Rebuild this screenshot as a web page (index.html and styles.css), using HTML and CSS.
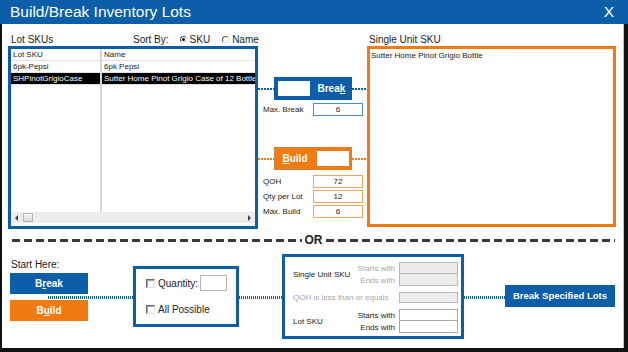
FILE: index.html
```html
<!doctype html>
<html lang="en">
<head>
    <meta charset="UTF-8">
    <title>Build/Break Inventory Lots</title>
    <link rel="stylesheet" href="styles.css">
</head>
<body>
    <div class="window">
        <div class="titlebar">
            <span class="title">Build/Break Inventory Lots</span>
            <span class="close">X</span>
        </div>

        <div class="client">
            <!-- top: lot list, break/build actions, single unit -->
            <div class="top">
                <div class="lots">
                    <div class="caption">
                        <span class="lots-title">Lot SKUs</span>
                        <span class="sort">Sort By:</span>
                        <span class="radio"><span class="radio-dot checked"></span>SKU</span>
                        <span class="radio"><span class="radio-dot"></span>Name</span>
                    </div>
                    <div class="listbox">
                        <div class="list-row list-head">
                            <span>Lot SKU</span>
                            <span>Name</span>
                        </div>
                        <div class="list-row">
                            <span>6pk-Pepsi</span>
                            <span>6pk Pepsi</span>
                        </div>
                        <div class="list-row selected">
                            <span>SHPinotGrigioCase</span>
                            <span>Sutter Home Pinot Grigio Case of 12 Bottles</span>
                        </div>
                        <div class="list-body"></div>
                        <div class="hscroll">
                            <span class="arrow left"></span>
                            <span class="thumb"></span>
                            <span class="arrow right"></span>
                        </div>
                    </div>
                </div>

                <div class="actions">
                    <div class="act-row">
                        <span class="dots blue"></span>
                        <div class="act-box break-box">
                            <span class="act-input"></span>
                            <span class="act-label">Brea<u>k</u></span>
                        </div>
                        <span class="dots blue"></span>
                    </div>
                    <div class="field field-first">
                        <span>Max. Break</span>
                        <span class="num blue-num">6</span>
                    </div>

                    <div class="act-row build-row">
                        <span class="dots orange"></span>
                        <div class="act-box build-box">
                            <span class="act-label build-label"><u>B</u>uild</span>
                            <span class="act-input"></span>
                        </div>
                        <span class="dots orange"></span>
                    </div>
                    <div class="field field-qoh">
                        <span>QOH</span>
                        <span class="num">72</span>
                    </div>
                    <div class="field">
                        <span>Qty per Lot</span>
                        <span class="num">12</span>
                    </div>
                    <div class="field">
                        <span>Max. Build</span>
                        <span class="num">6</span>
                    </div>
                </div>

                <div class="unit">
                    <div class="caption unit-title">Single Unit SKU</div>
                    <div class="unit-box">Sutter Home Pinot Grigio Bottle</div>
                </div>
            </div>

            <div class="or-sep">
                <span class="dash"></span>
                <span class="or">OR</span>
                <span class="dash"></span>
            </div>

            <!-- bottom: batch break/build -->
            <div class="bottom">
                <div class="start">
                    <div class="start-title">Start Here:</div>
                    <div class="btn btn-break">B<u>r</u>eak</div>
                    <div class="btn btn-build">B<u>u</u>ild</div>
                </div>

                <span class="dots blue link link-first"></span>

                <div class="qty-box">
                    <div class="check-row">
                        <span class="check"></span>
                        <span>Quantity:</span>
                        <span class="qty-input"></span>
                    </div>
                    <div class="check-row check-all">
                        <span class="check"></span>
                        <span>All Possible</span>
                    </div>
                </div>

                <span class="dots blue link link-mid"></span>

                <div class="filter-box">
                    <div class="flt">
                        <span class="flt-label span2">Single Unit SKU</span>
                        <span class="flt-hint">Starts with</span>
                        <span class="flt-input off"></span>
                        <span class="flt-hint">Ends with</span>
                        <span class="flt-input off second"></span>
                    </div>
                    <div class="flt flt-one">
                        <span class="flt-label wide muted">QOH is less than or equals</span>
                        <span class="flt-input off"></span>
                    </div>
                    <div class="flt flt-gap">
                        <span class="flt-label span2">Lot SKU</span>
                        <span class="flt-hint dark">Starts with</span>
                        <span class="flt-input"></span>
                        <span class="flt-hint dark">Ends with</span>
                        <span class="flt-input second"></span>
                    </div>
                </div>

                <span class="dots blue link link-last"></span>

                <div class="btn btn-lots">Break Specified Lots</div>
            </div>
        </div>
    </div>
</body>
</html>
```

FILE: styles.css
```css
body {
    margin: 0;
    background-color: #111;
    font-family: 'Liberation Sans', Arial, sans-serif;
    color: #222;
}

.window {
    width: 628px;
    height: 352px;
    background-color: #111;
    overflow: hidden;
}

.titlebar {
    height: 24px;
    background-color: #0c5ea8;
    color: #fff;
    display: flex;
    align-items: center;
    justify-content: space-between;
    padding: 0 14px 0 10px;
    font-size: 15.5px;
}

.client {
    width: 621px;
    height: 324px;
    margin-left: 2px;
    background-color: #fff;
    border-right: 1px solid #a9c8e8;
    white-space: nowrap;
}

/* top section */

.top {
    display: flex;
    padding: 9px 0 0 6px;
}

.caption {
    height: 13px;
    line-height: 13px;
    font-size: 10px;
    display: flex;
    align-items: center;
}

.caption > span {
    flex: none;
}

.lots {
    width: 250px;
}

.lots-title {
    width: 122px;
    padding-left: 3px;
}

.sort {
    margin-right: 11px;
}

.radio {
    display: flex;
    align-items: center;
    margin-right: 12px;
}

.radio-dot {
    width: 5px;
    height: 5px;
    margin-right: 3px;
    border: 1px solid;
    border-color: #555 #ddd #ddd #555;
    border-radius: 50%;
    display: flex;
    align-items: center;
    justify-content: center;
}

.radio-dot.checked::after {
    content: "";
    width: 3px;
    height: 3px;
    border-radius: 50%;
    background-color: #111;
}

.listbox {
    height: 183px;
    box-sizing: border-box;
    border: 3px solid #0c5ea8;
    display: flex;
    flex-direction: column;
    font-size: 8px;
}

.list-row {
    display: grid;
    grid-template-columns: 89px 1fr;
    height: 11px;
    line-height: 11px;
    border-bottom: 1px solid #e2e2e2;
    overflow: hidden;
}

.list-row span {
    padding-left: 2px;
    overflow: hidden;
    border-left: 2px solid #d6d6d6;
}

.list-row span:first-child {
    border-left: none;
}

.list-row.selected {
    background-color: #000;
    color: #fff;
}

.list-body {
    flex: 1;
    background: linear-gradient(to right, transparent 89px, #d6d6d6 89px, #d6d6d6 91px, transparent 91px);
}

.hscroll {
    height: 11px;
    margin-bottom: 3px;
    background-color: #ededed;
    display: flex;
    align-items: center;
    padding: 0 4px;
}

.arrow {
    width: 0;
    height: 0;
    border-top: 3px solid transparent;
    border-bottom: 3px solid transparent;
}

.arrow.left {
    border-right: 3px solid #444;
}

.arrow.right {
    border-left: 3px solid #444;
    margin-left: auto;
}

.thumb {
    width: 10px;
    height: 9px;
    margin-left: 5px;
    box-sizing: border-box;
    border: 1px solid #b9b9b9;
    background: linear-gradient(#f7f7f7, #d9d9d9);
}

/* break / build actions */

.actions {
    width: 109px;
    padding-top: 44px;
    font-size: 8px;
}

.act-row {
    display: flex;
    align-items: center;
    height: 23px;
}

.build-row {
    margin-top: 31px;
}

.dots {
    flex: 1;
    height: 2px;
}

.dots.blue {
    background: repeating-linear-gradient(90deg, #0c5ea8 0, #0c5ea8 2px, transparent 2px, transparent 3px);
}

.dots.orange {
    background: repeating-linear-gradient(90deg, #f07b12 0, #f07b12 2px, transparent 2px, transparent 3px);
}

.act-box {
    width: 78px;
    height: 23px;
    box-sizing: border-box;
    display: flex;
    align-items: center;
    padding: 0 4px;
}

.break-box {
    background-color: #0c5ea8;
}

.build-box {
    background-color: #f07b12;
    padding: 0 3px 0 0;
}

.act-input {
    width: 32px;
    height: 15px;
    background-color: #fff;
}

.act-label {
    color: #fff;
    font-weight: bold;
    font-size: 10px;
    margin-left: 8px;
}

.build-label {
    height: 23px;
    line-height: 21px;
    box-sizing: border-box;
    margin: 0 auto 0 0;
    padding-left: 8px;
    width: 43px;
    border: 1px solid #c2864f;
    border-right: none;
}

.field {
    display: flex;
    align-items: center;
    height: 13px;
    margin-top: 2px;
    padding-left: 5px;
}

.field span:first-child {
    flex: 1;
}

.field-first {
    margin-top: 3px;
}

.field-qoh {
    margin-top: 5px;
}

.num {
    width: 50px;
    height: 13px;
    line-height: 11px;
    margin-right: 4px;
    box-sizing: border-box;
    border: 1px solid #f5a25c;
    text-align: center;
}

.num.blue-num {
    border-color: #4f8bcb;
}

/* single unit */

.unit {
    width: 249px;
}

.unit-title {
    padding-left: 2px;
}

.unit-box {
    height: 181px;
    box-sizing: border-box;
    border: 3px solid #f07b12;
    padding: 2px 1px;
    font-size: 8px;
}

/* separator */

.or-sep {
    display: flex;
    align-items: center;
    height: 14px;
    margin-top: 4px;
    padding: 0 8px 0 10px;
}

.dash {
    flex: 1;
    height: 3px;
    background: repeating-linear-gradient(90deg, #3a3a3a 0, #3a3a3a 8px, transparent 8px, transparent 12px);
}

.or {
    font-size: 12px;
    font-weight: bold;
    margin: 0 3px;
}

/* bottom section */

.bottom {
    display: flex;
    align-items: flex-start;
    padding-left: 8px;
    font-size: 10px;
}

.start {
    width: 78px;
}

.start-title {
    margin-top: 11px;
    height: 13px;
    line-height: 13px;
    padding-left: 1px;
}

.btn {
    height: 21px;
    line-height: 21px;
    text-align: center;
    color: #fff;
    font-weight: bold;
}

.btn-break {
    margin-top: 2px;
    background-color: #0c5ea8;
}

.btn-build {
    margin-top: 6px;
    background-color: #f07b12;
}

.link {
    flex: none;
    height: 3px;
    margin-top: 49px;
}

.dots.link {
    background: repeating-linear-gradient(90deg, #0c5ea8 0, #0c5ea8 1px, transparent 1px, transparent 2px);
}

.link-first {
    width: 85px;
    margin-left: -40px;
}

.link-mid {
    width: 43px;
}

.link-last {
    width: 41px;
}

.qty-box {
    width: 106px;
    height: 61px;
    margin-top: 19px;
    box-sizing: border-box;
    border: 3px solid #0c5ea8;
    padding: 6px 0 0 10px;
}

.check-row {
    display: flex;
    align-items: center;
    height: 16px;
}

.check-all {
    margin-top: 11px;
    height: 14px;
}

.check {
    width: 9px;
    height: 9px;
    margin-right: 3px;
    box-sizing: border-box;
    border: 1px solid;
    border-color: #6b6b6b #e0e0e0 #e0e0e0 #6b6b6b;
    box-shadow: inset 1px 1px 0 #a9a9a9;
}

.qty-input {
    width: 27px;
    height: 16px;
    margin-left: 2px;
    box-sizing: border-box;
    border: 1px solid #b4b4b4;
}

.filter-box {
    width: 182px;
    height: 85px;
    margin-top: 7px;
    box-sizing: border-box;
    border: 3px solid #0c5ea8;
    padding: 5px 3px 0 8px;
    font-size: 8px;
}

.flt {
    display: grid;
    grid-template-columns: 52px 50px 63px;
    grid-template-rows: 12px 12px;
    align-items: center;
}

.flt-one {
    grid-template-rows: 11px;
    margin-top: 6px;
}

.flt-gap {
    margin-top: 6px;
}

.flt-label.span2 {
    grid-row: span 2;
}

.flt-label.wide {
    grid-column: span 2;
}

.flt-hint {
    text-align: right;
    color: #a8a8a8;
}

.flt-hint.dark,
.flt-label {
    color: #222;
}

.flt-label.muted {
    color: #a8a8a8;
}

.flt-input {
    grid-column: 3;
    justify-self: end;
    width: 59px;
    height: 12px;
    box-sizing: border-box;
    border: 1px solid #aaa;
    background-color: #fff;
}

.flt-one .flt-input {
    height: 11px;
}

.flt-input.off {
    background-color: #ececec;
    border-color: #b8b8b8;
}

.flt-input.second {
    border-top: none;
}

.btn-lots {
    width: 110px;
    height: 22px;
    line-height: 22px;
    margin-top: 38px;
    background-color: #0c5ea8;
    font-size: 9.5px;
}
```
